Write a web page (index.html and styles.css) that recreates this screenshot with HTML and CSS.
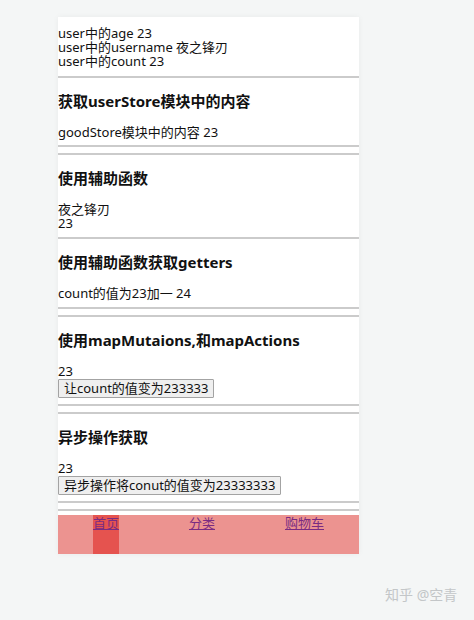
FILE: index.html
```html
<!DOCTYPE html>
<html lang="zh-CN">
<head>
<meta charset="utf-8">
<title>vuex demo</title>
<link rel="stylesheet" href="styles.css">
</head>
<body>
<div class="page">
  <div class="app">
    <div class="sec sec-first">
      <div class="line">user中的age 23</div>
      <div class="line">user中的username 夜之锋刃</div>
      <div class="line">user中的count 23</div>
    </div>
    <hr class="rule">
    <div class="sec">
      <h3 class="title">获取userStore模块中的内容</h3>
      <p class="text">goodStore模块中的内容 23</p>
    </div>
    <hr class="rule rule-tight">
    <hr class="rule rule-gap">
    <div class="sec">
      <h3 class="title">使用辅助函数</h3>
      <div class="text">
        <div class="line">夜之锋刃</div>
        <div class="line">23</div>
      </div>
    </div>
    <hr class="rule">
    <div class="sec">
      <h3 class="title">使用辅助函数获取getters</h3>
      <p class="text">count的值为23加一 24</p>
    </div>
    <hr class="rule">
    <hr class="rule rule-gap">
    <div class="sec">
      <h3 class="title">使用mapMutaions,和mapActions</h3>
      <div class="text">
        <div class="line">23</div>
        <button class="btn" type="button">让count的值变为233333</button>
      </div>
    </div>
    <hr class="rule rule-btn">
    <hr class="rule rule-gap">
    <div class="sec">
      <h3 class="title">异步操作获取</h3>
      <div class="text">
        <div class="line">23</div>
        <button class="btn" type="button">异步操作将conut的值变为23333333</button>
      </div>
    </div>
    <hr class="rule rule-btn">
    <hr class="rule rule-gap">
    <nav class="tabbar">
      <a class="tab active" href="#">首页</a>
      <a class="tab" href="#">分类</a>
      <a class="tab" href="#">购物车</a>
    </nav>
  </div>
  <div class="watermark">知乎 @空青</div>
</div>
</body>
</html>
```
FILE: styles.css
```css
html, body {
  margin: 0;
  padding: 0;
}
body {
  background: #f4f6f6;
  font-family: "Noto Sans", "Noto Sans CJK SC", sans-serif;
  color: #111;
  width: 474px;
  height: 620px;
  overflow: hidden;
}
.page {
  position: relative;
  height: 620px;
  padding-top: 17px;
  box-sizing: border-box;
}
.app {
  margin-left: 58px;
  width: 301px;
  background: #fff;
  box-shadow: 0 0 6px rgba(0, 0, 0, 0.05);
  font-size: 13px;
  line-height: 14px;
}
.sec-first {
  padding-top: 9px;
}
.line {
  line-height: 14px;
}
.title {
  margin: 13px 0 0;
  font-size: 15px;
  line-height: 20px;
  font-weight: bold;
}
.text {
  margin: 14px 0 0;
}
.rule {
  margin: 7px 0 0;
  border: 0;
  height: 2px;
  background: #cbcbcb;
}
.sec-first + .rule {
  margin-top: 8px;
}
.rule-tight {
  margin-top: 6px;
}
.rule-gap {
  margin-top: 6px;
}
.rule-btn {
  margin-top: 6px;
}
.btn {
  display: block;
  margin: 1px 0 0;
  height: 19px;
  padding: 0 5px;
  font-family: inherit;
  font-size: 13px;
  line-height: 15px;
  color: #111;
  background: #efefef;
  border: 1px solid #a3a3a3;
  border-radius: 1px;
}
.tabbar {
  margin-top: 4px;
  height: 39px;
  background: #ec9390;
  display: flex;
  justify-content: space-around;
  align-items: stretch;
}
.tab {
  color: #7a2b82;
  text-decoration: underline;
  font-size: 13px;
  line-height: 17px;
}
.tab.active {
  background: #e5534f;
}
.watermark {
  position: absolute;
  left: 385px;
  top: 586px;
  font-size: 14px;
  line-height: 18px;
  color: #c3c6c8;
}
```
